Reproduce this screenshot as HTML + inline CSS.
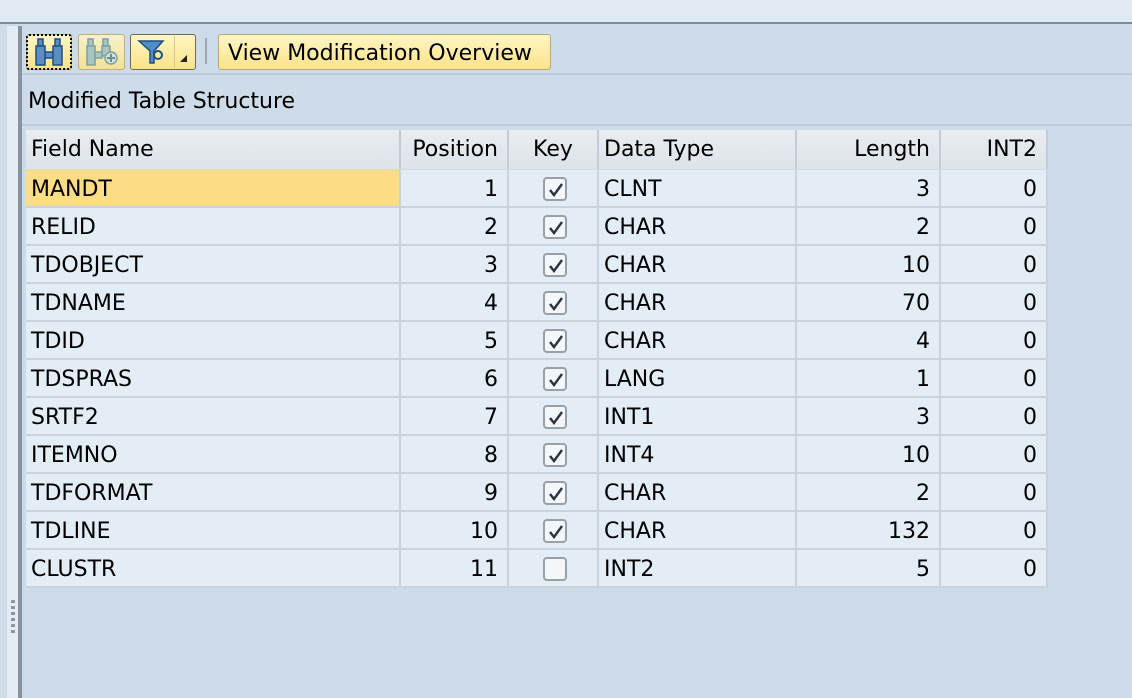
<!DOCTYPE html>
<html><head><style>
*{margin:0;padding:0;box-sizing:border-box}
body{width:1132px;height:698px;overflow:hidden;background:#cddce8;font-family:"DejaVu Sans","Liberation Sans",sans-serif;font-size:22px;color:#000;position:relative}
.a{position:absolute}
.top{left:0;top:0;width:1132px;height:24px;background:#dfeaf3;border-bottom:2px solid #7f8c98}
.ls{left:0;top:26px;width:7px;height:672px;background:#cfdde9}
.ls2{left:7px;top:26px;width:11px;height:672px;background:#e4edf5}
.ls3{left:18px;top:26px;width:4px;height:672px;background:#8593a0}
.btn{top:34px;height:36px;background:linear-gradient(#fff6c4,#fbe38a);border:1px solid #b9a670;border-radius:3px}
.hl{left:22px;width:1110px;height:2px;background:#bccbd8}
.cell{position:absolute;height:37px;line-height:39px;padding:0 9px 0 5px;white-space:nowrap;overflow:hidden}
.hd{background:linear-gradient(#e9edf1,#dde3e9);border-right:2px solid #c3ccd5}
.r{text-align:right}
.bd{background:#e2edf6;border-right:2px solid #c9d3dc;border-bottom:2px solid #c9d3dc}
.cb{position:absolute;left:34px;top:7px;width:24px;height:24px;border:2px solid #9aa0a6;border-radius:4px;background:#f4f7fa}
.cb svg{position:absolute;left:2px;top:2px}
</style></head><body>
<div class="a top"></div>
<div class="a ls"></div><div class="a ls2"></div><div class="a ls3"></div>
<div class="a" style="left:11px;top:600px;width:4px;height:34px;background:repeating-linear-gradient(#8a96a2 0 3px,transparent 3px 6px)"></div>
<div class="a btn" style="left:26px;width:46px;outline:2px dotted #000;outline-offset:-2px"></div>
<svg class="a" style="left:33px;top:37px" width="32" height="30" viewBox="0 0 32 30"><path d="M3 9h9v19H3zM20 9h9v19h-9zM12 15h8v6h-8zM5 2h5v7H5zM22 2h5v7h-5z" fill="#5b8fc4" stroke="#1f4f80" stroke-width="1.5"/></svg>
<div class="a btn" style="left:78px;width:47px;opacity:.85"></div>
<svg class="a" style="left:84px;top:37px" width="36" height="30" viewBox="0 0 36 30"><path d="M3 9h8v19H3zM18 9h8v10h-8zM11 15h7v6h-7zM4 2h5v7H4zM19 2h5v7h-5z" fill="#a9c6c3" stroke="#7fa09d" stroke-width="1.5"/><circle cx="27" cy="21" r="6" fill="#cfe0dd" stroke="#7fa09d" stroke-width="1.5"/><path d="M27 17v8M23 21h8" stroke="#6f8f8c" stroke-width="2"/></svg>
<div class="a btn" style="left:130px;width:66px;border-color:#6f6a55"></div>
<div class="a" style="left:174px;top:36px;width:1px;height:32px;background:#d8c98a"></div>
<svg class="a" style="left:137px;top:38px" width="30" height="28" viewBox="0 0 30 28"><path d="M2 3h24l-9 10v12h-4V13z" fill="#4f8ec9" stroke="#1f4f80" stroke-width="1.5"/><circle cx="21" cy="17" r="4" fill="none" stroke="#1f4f80" stroke-width="2"/></svg>
<svg class="a" style="left:180px;top:55px" width="8" height="8"><path d="M7 0V7H0z" fill="#222"/></svg>
<div class="a" style="left:205px;top:38px;width:2px;height:26px;background:#9aa6b2"></div>
<div class="a btn" style="left:218px;width:333px;line-height:37px;padding-left:9px;font-size:22px;white-space:nowrap">View Modification Overview</div>
<div class="a hl" style="top:73px"></div>
<div class="a" style="left:28px;top:89px;font-size:22px">Modified Table Structure</div>
<div class="a hl" style="top:124px"></div>
<div id="t"></div>
<script>
var cols=[[26,375,0],[401,108,1],[509,90,2],[599,198,0],[797,144,1],[941,107,1]];
var hd=["Field Name","Position","Key","Data Type","Length","INT2"];
var rows=[["MANDT",1,1,"CLNT",3],["RELID",2,1,"CHAR",2],["TDOBJECT",3,1,"CHAR",10],["TDNAME",4,1,"CHAR",70],["TDID",5,1,"CHAR",4],["TDSPRAS",6,1,"LANG",1],["SRTF2",7,1,"INT1",3],["ITEMNO",8,1,"INT4",10],["TDFORMAT",9,1,"CHAR",2],["TDLINE",10,1,"CHAR",132],["CLUSTR",11,0,"INT2",5]];
var h="";
cols.forEach(function(c,i){h+='<div class="cell hd'+(c[2]==1?' r':'')+'" style="left:'+c[0]+'px;top:130px;width:'+c[1]+'px;height:39px;line-height:39px;'+(c[2]==2?'text-align:center;padding:0':'')+'">'+hd[i]+'</div>';});
rows.forEach(function(r,j){var y=170+j*38;
var v=[r[0],r[1],'',r[3],r[4],0];
cols.forEach(function(c,i){var st='left:'+c[0]+'px;top:'+y+'px;width:'+c[1]+'px;height:38px;';
if(i==0&&j==0)st+='background:#fddc86;';
var inner=v[i];
if(i==2)inner='<div class="cb">'+(r[2]?'<svg width="18" height="18" viewBox="0 0 18 18"><path d="M3 9l4 5 8-11" fill="none" stroke="#2a3440" stroke-width="2.4"/></svg>':'')+'</div>';
h+='<div class="cell bd'+(c[2]==1?' r':'')+'" style="'+st+'">'+inner+'</div>';});});
document.getElementById('t').innerHTML=h;
</script>
</body></html>
